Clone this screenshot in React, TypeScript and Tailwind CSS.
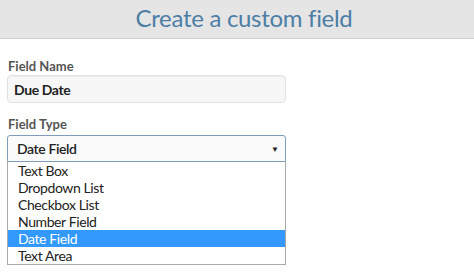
export default function App() {
  const options = ["Text Box", "Dropdown List", "Checkbox List", "Number Field", "Date Field", "Text Area"];
  return (
    <div className="h-[273px] w-[474px] overflow-hidden bg-white font-['Lato',sans-serif]">
      <header className="flex h-[39px] items-center justify-center border-b border-[#cfcfcf] bg-[#e5e5e5] pb-[3px] pl-[14px]">
        <h1 className="text-[24px] leading-none tracking-[-0.3px] text-[#4d7ea5]">Create a custom field</h1>
      </header>

      <div className="w-[286px] pl-[7px] pt-[19px]">
        <label className="block pl-[1px] text-[13px] font-bold leading-[16px] text-[#555]">Field Name</label>
        <div className="mt-[1px] flex h-[28px] items-center rounded-[4px] border border-[#e2e2e2] bg-[#f7f7f7] pl-[6px] shadow-[inset_0_1px_1px_rgba(0,0,0,0.04)]">
          <span className="text-[14px] font-bold tracking-[-0.4px] text-[#222]">Due Date</span>
        </div>

        <label className="mt-[13px] block pl-[1px] text-[13px] font-bold leading-[16px] text-[#555]">Field Type</label>
        <div className="mt-[3px] flex h-[27px] items-center justify-between rounded-t-[3px] border border-[#7f9db9] bg-[#fafafa] pl-[9px] pr-[6px]">
          <span className="text-[14px] font-semibold tracking-[-0.4px] text-[#222]">Date Field</span>
          <span className="text-[8px] text-[#222]">▼</span>
        </div>
        <ul className="border border-t-0 border-[#a8a8a8] bg-white">
          {options.map((o) => (
            <li
              key={o}
              className={`flex h-[17px] items-center pl-[10px] text-[14px] tracking-[-0.4px] ${o === "Date Field" ? "bg-[#3399ff] text-white" : "text-[#222]"}`}
            >
              {o}
            </li>
          ))}
        </ul>
      </div>
    </div>
  );
}
